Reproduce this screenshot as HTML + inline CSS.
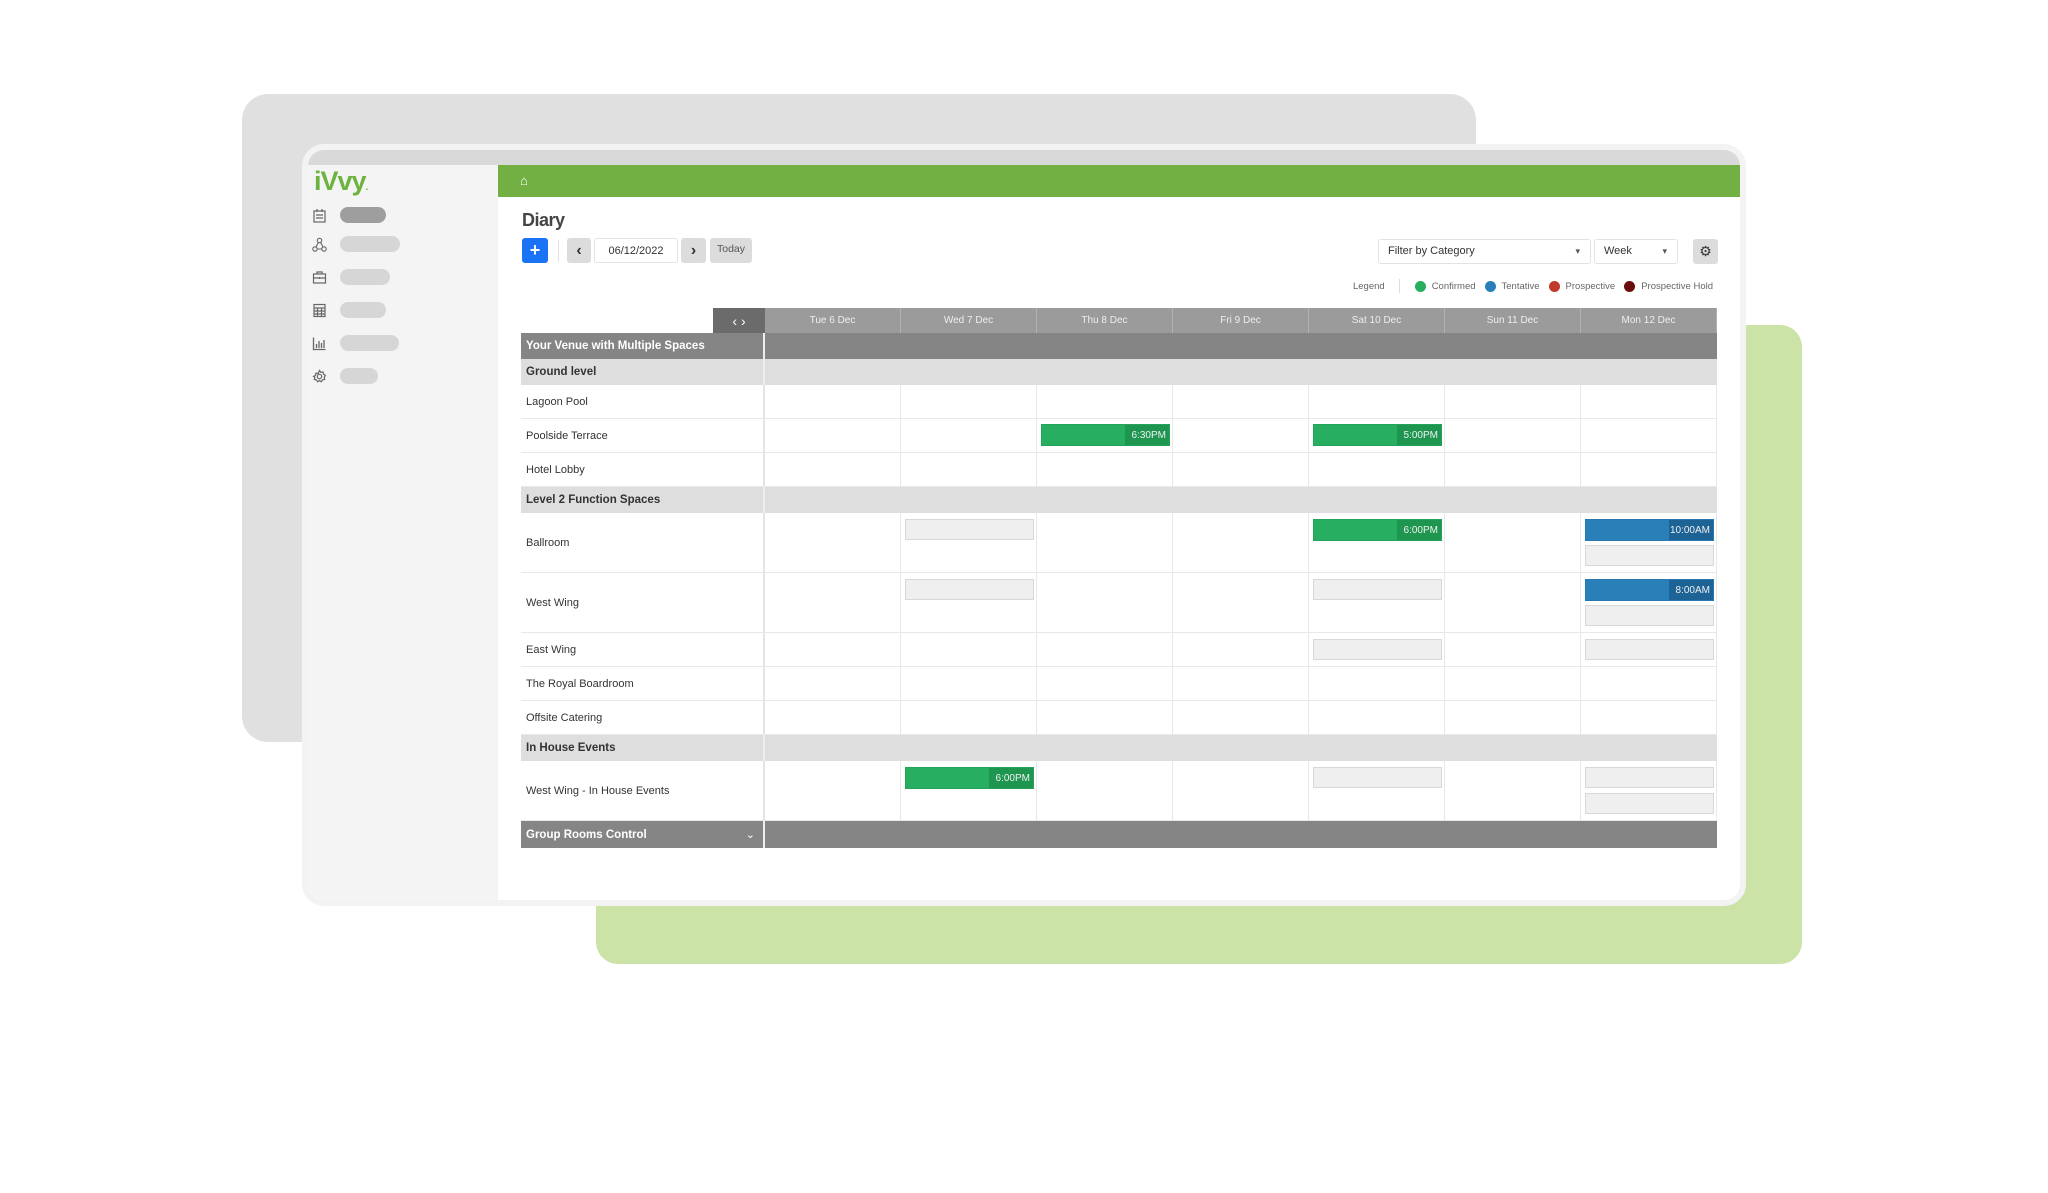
<!DOCTYPE html>
<html><head><meta charset="utf-8"><style>
*{box-sizing:border-box;margin:0;padding:0}
body{width:2048px;height:1193px;background:#fff;position:relative;overflow:hidden;font-family:"Liberation Sans",Arial,sans-serif;color:#333}
.abs{position:absolute}
#grey{left:242px;top:94px;width:1234px;height:648px;background:#e0e0e0;border-radius:26px}
#green{left:596px;top:325px;width:1206px;height:639px;background:#cce3a8;border-radius:22px}
#win{left:302px;top:144px;width:1444px;height:762px;background:#fff;border:6px solid #f3f3f3;border-radius:22px;overflow:hidden}
#topbar{left:0;top:0;width:100%;height:15px;background:#d9d9d9;border-radius:14px 14px 0 0}
#side{left:0;top:15px;width:190px;height:740px;background:#f4f4f4}
#hdr{left:190px;top:15px;width:1244px;height:32px;background:#72b043}
.pill{position:absolute;left:340px;height:16px;border-radius:8px;background:#d6d6d6}
.ico{position:absolute;left:312px;width:15px;height:15px}
.btn{position:absolute;top:238px;height:25px;border-radius:3px;background:#dcdcdc;display:flex;align-items:center;justify-content:center;font-size:12px;color:#333}
.sel{position:absolute;top:239px;height:25px;border:1px solid #e3e3e3;border-radius:3px;background:#fff;font-size:11px;padding-left:9px;line-height:23px;color:#333}
.sel:after{content:"▾";position:absolute;right:10px;top:0;font-size:9px;color:#555}
#grid{left:521px;top:308px;width:1196px}
.r{display:flex;width:1196px}
.c0{width:244px;flex:none;font-size:11px;padding-left:5px;display:flex;align-items:center;border-right:2px solid #e4e4e4}
.c{width:136px;flex:none;position:relative;border-right:1px solid #e8e8e8}
.r.sp{border-bottom:1px solid #e8e8e8}
.hd .c{background:#9b9b9b;color:#eee;font-size:10px;display:flex;align-items:center;justify-content:center;border-right:1px solid #b0b0b0}
.vn{background:#858585}
.vn .c0{color:#fff;font-weight:bold;font-size:11.5px;border-right:2px solid #eee}
.vn .c{border:0}
.gp{background:#dedede}
.gp .c0{font-weight:bold;font-size:11.5px;color:#333;border-right:2px solid #eee}
.gp .c{border:0}
.ev{position:absolute;left:4px;width:129px;height:22px;border:1px solid rgba(0,0,0,.06)}
.g{background:#27ae60}.b{background:#2980b9}
.ev span{position:absolute;right:0;top:0;bottom:0;width:44px;font-size:10px;color:#f0f0f0;display:flex;align-items:center;justify-content:flex-end;padding-right:3px}
.g span{background:#1f9650}.b span{background:#1d6396}
.ph{position:absolute;left:4px;width:129px;height:21px;background:#efefef;border:1px solid #d8d8d8}
#legend{position:absolute;right:335px;top:279px;height:14px;display:flex;align-items:center;font-size:9.5px;color:#666;white-space:nowrap}
#legend .it{display:flex;align-items:center;margin-left:9px}
.dot{display:inline-block;width:11px;height:11px;border-radius:50%;margin-right:6px}
</style></head><body>
<div id="grey" class="abs"></div>
<div id="green" class="abs"></div>
<div id="win" class="abs">
 <div id="topbar" class="abs"></div>
 <div id="side" class="abs"></div>
 <div id="hdr" class="abs"><div style="position:absolute;left:22px;top:8px;color:#fff;font-size:13px">&#8962;</div></div>
</div>
<div class="abs" style="left:314px;top:166px;font-size:27px;color:#6db33f;font-weight:bold;letter-spacing:-1px">iVvy<span style="font-size:10px">.</span></div>
<svg class="ico" style="top:208px" viewBox="0 0 15 15" fill="none" stroke="#666" stroke-width="1.2"><rect x="2" y="3" width="11" height="11"/><path d="M5 1v3M10 1v3M4 7h7M4 10h7"/></svg>
<svg class="ico" style="top:237px" viewBox="0 0 15 15" fill="none" stroke="#666" stroke-width="1.1"><circle cx="7.5" cy="3.5" r="2.2"/><circle cx="3" cy="12" r="2.2"/><circle cx="12" cy="12" r="2.2"/><path d="M6.3 5.5L4 10M8.7 5.5L11 10M5.2 12h4.6"/></svg>
<svg class="ico" style="top:270px" viewBox="0 0 15 15" fill="none" stroke="#666" stroke-width="1.2"><rect x="1.5" y="4" width="12" height="9"/><path d="M5 4V2h5v2M1.5 8h12M7.5 7v2"/></svg>
<svg class="ico" style="top:303px" viewBox="0 0 15 15" fill="none" stroke="#666" stroke-width="1.2"><rect x="2" y="1.5" width="11" height="12"/><path d="M2 5h11M2 8h11M2 11h11M5.5 5v8.5M9.5 5v8.5"/></svg>
<svg class="ico" style="top:336px" viewBox="0 0 15 15" fill="none" stroke="#666" stroke-width="1.3"><path d="M1.5 1.5v12h12M4.5 12V8M7 12V5M9.5 12V7M12 12V4"/></svg>
<svg class="ico" style="top:369px" viewBox="0 0 15 15" fill="none" stroke="#666" stroke-width="1.2"><circle cx="7.5" cy="7.5" r="2.2"/><path d="M7.5 1.5l1.3 1.8 2.2-.4.5 2.2 1.9 1.2-1.2 1.9.5 2.2-2.2.5-1.2 1.9-1.8-1.3-1.8 1.3-1.2-1.9-2.2-.5.5-2.2L1.6 7.5l1.9-1.2.5-2.2 2.2.4z"/></svg>
<div class="pill" style="top:207px;width:46px;background:#9e9e9e"></div>
<div class="pill" style="top:236px;width:60px"></div>
<div class="pill" style="top:269px;width:50px"></div>
<div class="pill" style="top:302px;width:46px"></div>
<div class="pill" style="top:335px;width:59px"></div>
<div class="pill" style="top:368px;width:38px"></div>
<div class="abs" style="left:522px;top:210px;font-size:18px;font-weight:bold;color:#444;letter-spacing:-0.5px">Diary</div>
<div class="btn" style="left:522px;width:26px;background:#1a73f5;color:#fff;font-weight:bold;font-size:18px">+</div>
<div class="abs" style="left:558px;top:240px;width:1px;height:22px;background:#e2e2e2"></div>
<div class="btn" style="left:567px;width:24px;font-weight:bold;font-size:16px">&#8249;</div>
<div class="btn" style="left:594px;width:84px;background:#fff;border:1px solid #e3e3e3;font-size:11px">06/12/2022</div>
<div class="btn" style="left:681px;width:25px;font-weight:bold;font-size:16px">&#8250;</div>
<div class="btn" style="left:710px;width:42px;font-size:10.5px;align-items:flex-start;padding-top:5px;color:#555">Today</div>
<div class="sel" style="left:1378px;width:213px">Filter by Category</div>
<div class="sel" style="left:1594px;width:84px">Week</div>
<div class="btn" style="left:1693px;top:239px;width:25px;font-size:14px;color:#333">&#9881;</div>
<div id="legend"><span>Legend</span><span style="display:inline-block;width:1px;height:14px;background:#ddd;margin:0 6px 0 14px"></span><span class="it"><span class="dot" style="background:#27ae60"></span>Confirmed</span><span class="it"><span class="dot" style="background:#2980b9"></span>Tentative</span><span class="it"><span class="dot" style="background:#c0392b"></span>Prospective</span><span class="it"><span class="dot" style="background:#6b0d0d"></span>Prospective Hold</span></div>
<div id="grid" class="abs">
 <div class="r hd" style="height:25px"><div class="c0" style="border:0;position:relative"><div style="position:absolute;right:0;top:0;width:52px;height:25px;background:#6b6b6b;color:#fff;font-size:14px;display:flex;justify-content:space-around;align-items:center">&#8249; &#8250;</div></div><div class="c">Tue 6 Dec</div><div class="c">Wed 7 Dec</div><div class="c">Thu 8 Dec</div><div class="c">Fri 9 Dec</div><div class="c">Sat 10 Dec</div><div class="c">Sun 11 Dec</div><div class="c">Mon 12 Dec</div></div>
 <div class="r vn" style="height:26px"><div class="c0">Your Venue with Multiple Spaces</div></div>
 <div class="r gp" style="height:26px"><div class="c0">Ground level</div></div>
 <div class="r sp" style="height:34px"><div class="c0">Lagoon Pool</div><div class="c"></div><div class="c"></div><div class="c"></div><div class="c"></div><div class="c"></div><div class="c"></div><div class="c"></div></div>
 <div class="r sp" style="height:34px"><div class="c0">Poolside Terrace</div><div class="c"></div><div class="c"></div><div class="c"><div class="ev g" style="top:5px"><span>6:30PM</span></div></div><div class="c"></div><div class="c"><div class="ev g" style="top:5px"><span>5:00PM</span></div></div><div class="c"></div><div class="c"></div></div>
 <div class="r sp" style="height:34px"><div class="c0">Hotel Lobby</div><div class="c"></div><div class="c"></div><div class="c"></div><div class="c"></div><div class="c"></div><div class="c"></div><div class="c"></div></div>
 <div class="r gp" style="height:26px"><div class="c0">Level 2 Function Spaces</div></div>
 <div class="r sp" style="height:60px"><div class="c0">Ballroom</div><div class="c"></div><div class="c"><div class="ph" style="top:6px"></div></div><div class="c"></div><div class="c"></div><div class="c"><div class="ev g" style="top:6px"><span>6:00PM</span></div></div><div class="c"></div><div class="c"><div class="ev b" style="top:6px"><span>10:00AM</span></div><div class="ph" style="top:32px"></div></div></div>
 <div class="r sp" style="height:60px"><div class="c0">West Wing</div><div class="c"></div><div class="c"><div class="ph" style="top:6px"></div></div><div class="c"></div><div class="c"></div><div class="c"><div class="ph" style="top:6px"></div></div><div class="c"></div><div class="c"><div class="ev b" style="top:6px"><span>8:00AM</span></div><div class="ph" style="top:32px"></div></div></div>
 <div class="r sp" style="height:34px"><div class="c0">East Wing</div><div class="c"></div><div class="c"></div><div class="c"></div><div class="c"></div><div class="c"><div class="ph" style="top:6px"></div></div><div class="c"></div><div class="c"><div class="ph" style="top:6px"></div></div></div>
 <div class="r sp" style="height:34px"><div class="c0">The Royal Boardroom</div><div class="c"></div><div class="c"></div><div class="c"></div><div class="c"></div><div class="c"></div><div class="c"></div><div class="c"></div></div>
 <div class="r sp" style="height:34px"><div class="c0">Offsite Catering</div><div class="c"></div><div class="c"></div><div class="c"></div><div class="c"></div><div class="c"></div><div class="c"></div><div class="c"></div></div>
 <div class="r gp" style="height:26px"><div class="c0">In House Events</div></div>
 <div class="r sp" style="height:60px"><div class="c0">West Wing - In House Events</div><div class="c"></div><div class="c"><div class="ev g" style="top:6px"><span>6:00PM</span></div></div><div class="c"></div><div class="c"></div><div class="c"><div class="ph" style="top:6px"></div></div><div class="c"></div><div class="c"><div class="ph" style="top:6px"></div><div class="ph" style="top:32px"></div></div></div>
 <div class="r vn" style="height:27px"><div class="c0" style="justify-content:space-between;padding-right:8px">Group Rooms Control<span style="font-weight:normal;font-size:11px">&#8964;</span></div></div>
</div>
</body></html>
